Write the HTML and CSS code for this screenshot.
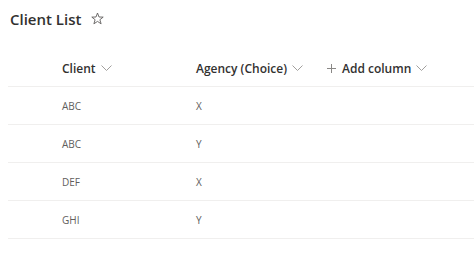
FILE: index.html
```html
<!DOCTYPE html>
<html>
<head>
<meta charset="utf-8">
<link rel="stylesheet" href="styles.css">
</head>
<body>
<div class="page">
  <div class="title">
    <h1>Client List</h1>
    <svg class="star" width="13" height="13" viewBox="0 0 13 13"><path d="M6.5 1 L8 5 L12.2 5.1 L8.9 7.7 L10.1 11.8 L6.5 9.4 L2.9 11.8 L4.1 7.7 L0.8 5.1 L5 5 Z" fill="none" stroke="#605e5c" stroke-width="0.9" stroke-linejoin="round"/></svg>
  </div>
  <div class="list">
    <div class="row head">
      <div class="cell c1">Client <svg class="chev" width="11" height="6" viewBox="0 0 11 6"><path d="M0.5 0.5 L5.5 5.5 L10.5 0.5" fill="none" stroke="#a19f9d" stroke-width="1"/></svg></div>
      <div class="cell c2">Agency (Choice) <svg class="chev" width="11" height="6" viewBox="0 0 11 6"><path d="M0.5 0.5 L5.5 5.5 L10.5 0.5" fill="none" stroke="#a19f9d" stroke-width="1"/></svg></div>
      <div class="cell c3"><svg class="plus" width="9" height="9" viewBox="0 0 9 9"><path d="M4.5 0 V9 M0 4.5 H9" stroke="#8a8886" stroke-width="1"/></svg> Add column <svg class="chev" width="11" height="6" viewBox="0 0 11 6"><path d="M0.5 0.5 L5.5 5.5 L10.5 0.5" fill="none" stroke="#a19f9d" stroke-width="1"/></svg></div>
    </div>
    <div class="row"><div class="cell c1">ABC</div><div class="cell c2">X</div><div class="cell c3"></div></div>
    <div class="row"><div class="cell c1">ABC</div><div class="cell c2">Y</div><div class="cell c3"></div></div>
    <div class="row"><div class="cell c1">DEF</div><div class="cell c2">X</div><div class="cell c3"></div></div>
    <div class="row"><div class="cell c1">GHI</div><div class="cell c2">Y</div><div class="cell c3"></div></div>
  </div>
</div>
</body>
</html>
```
FILE: styles.css
```css
html, body {
  margin: 0;
  padding: 0;
  background: #ffffff;
}
.page {
  font-family: "Open Sans", "Noto Sans", sans-serif;
  color: #323130;
}
.title {
  display: flex;
  align-items: center;
  gap: 10px;
  padding: 9px 0 0 10px;
  height: 20px;
}
.title h1 {
  margin: 0;
  font-size: 15px;
  font-weight: 600;
  line-height: 20px;
  color: #323130;
}
.star {
  display: block;
  margin-top: -1px;
}
.list {
  margin-top: 21px;
  margin-left: 8px;
}
.row {
  display: grid;
  grid-template-columns: 188px 131px 1fr;
  height: 37px;
  border-bottom: 1px solid #f0efee;
  align-items: center;
  font-size: 10px;
  color: #605e5c;
}
.row.head {
  height: 36px;
  font-size: 12px;
  font-weight: 600;
  color: #323130;
}
.cell {
  display: flex;
  align-items: center;
  white-space: nowrap;
}
.c1 {
  padding-left: 54px;
}
.chev {
  display: block;
  margin-left: 5px;
}
.plus {
  display: block;
  margin-right: 6px;
}
```
